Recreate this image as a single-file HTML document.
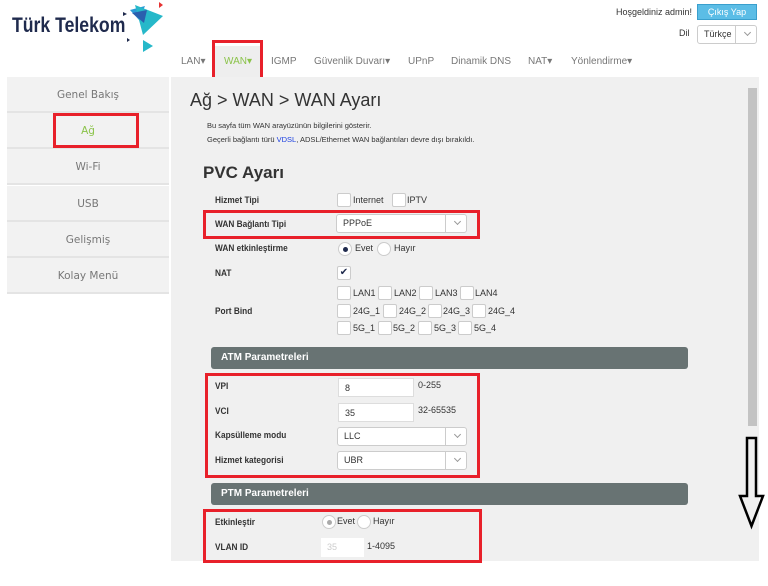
<!DOCTYPE html>
<html><head><meta charset="utf-8"><style>
*{margin:0;padding:0;box-sizing:border-box}
body{width:768px;height:586px;background:#fff;position:relative;overflow:hidden;font-family:"Liberation Sans",Arial,sans-serif;color:#333}
.a{position:absolute}
.nav{font-size:10px;color:#777;top:56px}
.side{left:7px;width:162px;height:36px;border-bottom:2px solid #e4e4e4;background:#f2f2f2;text-align:center;color:#777;line-height:36px;font-family:"DejaVu Sans",sans-serif;font-size:10.5px}
.red{border:3px solid #e8202a}
.lbl{left:215px;font-size:9px;font-weight:bold;color:#333;transform:scaleX(.92);transform-origin:left}
.cb{width:14px;height:14px;background:#fff;border:1px solid #ccc;border-radius:2px}
.t9{font-size:9px;color:#333}
.sel{background:#fff;border:1px solid #ccc;border-radius:3px;height:19px;font-size:9px;line-height:17px;padding-left:6px}
.sel:after{content:"";position:absolute;right:0;top:0;width:20px;height:17px;border-left:1px solid #ccc}
.sel i{position:absolute;right:6px;top:4px;width:5px;height:5px;border-right:1px solid #999;border-bottom:1px solid #999;transform:rotate(45deg)}
.inp{background:#fff;border:1px solid #ddd;height:19px;font-size:9px;line-height:19px;padding-left:6px}
.hdr{left:211px;width:477px;height:22px;background:#687373;border-radius:3px;color:#fff;font-weight:bold;font-size:10px;line-height:22px;padding-left:10px}
.rad{width:14px;height:14px;border-radius:50%;background:#fff;border:1px solid #ccc}
</style></head><body>
<div class="a" style="left:12px;top:14px;font-size:21px;font-weight:bold;color:#1f2a4d;transform:scaleX(.84);transform-origin:left;white-space:nowrap">Türk Telekom</div>
<svg class="a" style="left:115px;top:0" width="55" height="55">
<polygon points="15,10 30,6 24,20" fill="#2a9bd6"/><polygon points="20,5 48,16 28,35" fill="#26b8c9"/><polygon points="17,13 32,10 29,23" fill="#2a5fae"/><polygon points="44,2 48,5 44,8" fill="#e63333"/><polygon points="8,12 12,14 8,16" fill="#1f2a4d"/><polygon points="28,40 38,46 28,52" fill="#26b8c9"/><polygon points="12,38 15,40 12,42" fill="#1f2a4d"/>
</svg>
<div class="a" style="right:76px;top:7px;font-size:9px;color:#333">Hoşgeldiniz admin!</div>
<div class="a" style="left:697px;top:4px;width:60px;height:16px;background:#5bbde6;border:1px solid #3a9fcd;color:#fff;font-size:9px;text-align:center;line-height:14px">Çıkış Yap</div>
<div class="a" style="left:679px;top:28px;font-size:9px">Dil</div>
<div class="a sel" style="left:697px;top:25px;width:60px"><span>Türkçe</span><i></i></div>
<div class="a" style="left:214px;top:46px;width:47px;height:31px;background:#eee"></div>
<div class="a nav" style="left:181px">LAN▾</div>
<div class="a nav" style="left:224px;color:#8bc34a">WAN▾</div>
<div class="a nav" style="left:271px">IGMP</div>
<div class="a nav" style="left:314px">Güvenlik Duvarı▾</div>
<div class="a nav" style="left:408px">UPnP</div>
<div class="a nav" style="left:451px">Dinamik DNS</div>
<div class="a nav" style="left:528px">NAT▾</div>
<div class="a nav" style="left:571px">Yönlendirme▾</div>
<div class="a red" style="left:212px;top:40px;width:51px;height:40px"></div>
<div class="a side" style="top:77px">Genel Bakış</div>
<div class="a side" style="top:113px;color:#8bc34a">Ağ</div>
<div class="a side" style="top:149px">Wi-Fi</div>
<div class="a side" style="top:186px">USB</div>
<div class="a side" style="top:222px">Gelişmiş</div>
<div class="a side" style="top:258px">Kolay Menü</div>
<div class="a red" style="left:53px;top:113px;width:86px;height:35px"></div>
<div class="a" style="left:171px;top:77px;width:588px;height:484px;background:#f0f0f0"></div>
<div class="a" style="left:748px;top:88px;width:9px;height:338px;background:#c3c3c3"></div>
<div class="a" style="left:190px;top:90px;font-size:18px;color:#333">Ağ &gt; WAN &gt; WAN Ayarı</div>
<div class="a" style="left:207px;top:121px;font-size:7.5px">Bu sayfa tüm WAN arayüzünün bilgilerini gösterir.</div>
<div class="a" style="left:207px;top:135px;font-size:7.5px">Geçerli bağlantı türü <span style="color:#1a3ee0">VDSL</span>, ADSL/Ethernet WAN bağlantıları devre dışı bırakıldı.</div>
<div class="a" style="left:203px;top:163px;font-size:17px;font-weight:bold">PVC Ayarı</div>
<div class="a lbl" style="top:195px">Hizmet Tipi</div>
<div class="a cb" style="left:337px;top:193px"></div><div class="a t9" style="left:353px;top:195px">Internet</div>
<div class="a cb" style="left:392px;top:193px"></div><div class="a t9" style="left:407px;top:195px">IPTV</div>
<div class="a lbl" style="top:219px">WAN Bağlantı Tipi</div>
<div class="a sel" style="left:336px;top:214px;width:131px">PPPoE<i></i></div>
<div class="a red" style="left:203px;top:210px;width:277px;height:29px"></div>
<div class="a lbl" style="top:243px">WAN etkinleştirme</div>
<div class="a rad" style="left:338px;top:242px"></div><div class="a" style="left:343px;top:247px;width:5px;height:5px;border-radius:50%;background:#1f2a4d"></div>
<div class="a t9" style="left:355px;top:243px">Evet</div>
<div class="a rad" style="left:377px;top:242px"></div><div class="a t9" style="left:394px;top:243px">Hayır</div>
<div class="a lbl" style="top:268px">NAT</div>
<div class="a cb" style="left:337px;top:266px;text-align:center;font-size:10px;line-height:12px;color:#1f2a4d">✔</div>
<div class="a lbl" style="top:306px">Port Bind</div>
<div class="a cb" style="left:337px;top:286px"></div><div class="a t9" style="left:353px;top:288px">LAN1</div>
<div class="a cb" style="left:378px;top:286px"></div><div class="a t9" style="left:394px;top:288px">LAN2</div>
<div class="a cb" style="left:419px;top:286px"></div><div class="a t9" style="left:435px;top:288px">LAN3</div>
<div class="a cb" style="left:460px;top:286px"></div><div class="a t9" style="left:475px;top:288px">LAN4</div>
<div class="a cb" style="left:337px;top:304px"></div><div class="a t9" style="left:353px;top:306px">24G_1</div>
<div class="a cb" style="left:383px;top:304px"></div><div class="a t9" style="left:399px;top:306px">24G_2</div>
<div class="a cb" style="left:428px;top:304px"></div><div class="a t9" style="left:443px;top:306px">24G_3</div>
<div class="a cb" style="left:472px;top:304px"></div><div class="a t9" style="left:488px;top:306px">24G_4</div>
<div class="a cb" style="left:337px;top:321px"></div><div class="a t9" style="left:353px;top:323px">5G_1</div>
<div class="a cb" style="left:378px;top:321px"></div><div class="a t9" style="left:393px;top:323px">5G_2</div>
<div class="a cb" style="left:418px;top:321px"></div><div class="a t9" style="left:434px;top:323px">5G_3</div>
<div class="a cb" style="left:458px;top:321px"></div><div class="a t9" style="left:474px;top:323px">5G_4</div>
<div class="a hdr" style="top:347px">ATM Parametreleri</div>
<div class="a lbl" style="top:381px">VPI</div>
<div class="a inp" style="left:338px;top:378px;width:76px">8</div><div class="a t9" style="left:418px;top:380px">0-255</div>
<div class="a lbl" style="top:406px">VCI</div>
<div class="a inp" style="left:338px;top:403px;width:76px">35</div><div class="a t9" style="left:418px;top:405px">32-65535</div>
<div class="a lbl" style="top:430px">Kapsülleme modu</div>
<div class="a sel" style="left:337px;top:427px;width:130px">LLC<i></i></div>
<div class="a lbl" style="top:455px">Hizmet kategorisi</div>
<div class="a sel" style="left:337px;top:451px;width:130px">UBR<i></i></div>
<div class="a red" style="left:205px;top:373px;width:275px;height:105px"></div>
<div class="a hdr" style="top:483px">PTM Parametreleri</div>
<div class="a lbl" style="top:517px">Etkinleştir</div>
<div class="a rad" style="left:322px;top:515px"></div><div class="a" style="left:327px;top:520px;width:5px;height:5px;border-radius:50%;background:#aaa"></div>
<div class="a t9" style="left:337px;top:516px">Evet</div>
<div class="a rad" style="left:357px;top:515px"></div><div class="a t9" style="left:373px;top:516px">Hayır</div>
<div class="a lbl" style="top:542px">VLAN ID</div>
<div class="a inp" style="left:321px;top:538px;width:43px;color:#ccc;border:none">35</div><div class="a t9" style="left:367px;top:541px">1-4095</div>
<div class="a red" style="left:203px;top:509px;width:279px;height:54px"></div>
<svg class="a" style="left:738px;top:436px" width="28" height="94"><path d="M9 2 H18 V60 H25 L13.5 90 L2 60 H9 Z" fill="none" stroke="#000" stroke-width="2.5"/></svg>
</body></html>
